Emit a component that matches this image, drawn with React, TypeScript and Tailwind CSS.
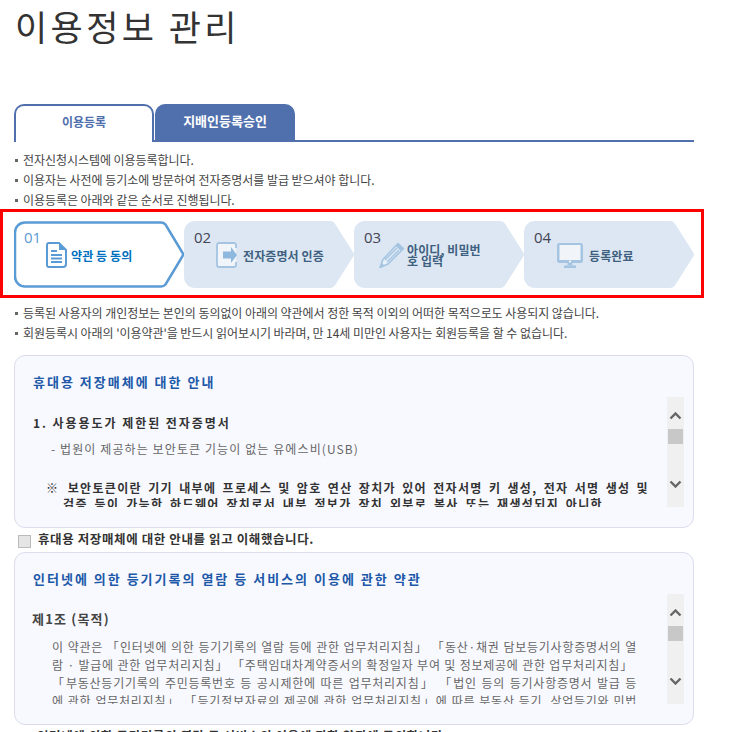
import type { ReactNode } from "react";

const KR = "font-['Noto_Sans_CJK_KR','Liberation_Sans',sans-serif]";

function DocIcon() {
	return (
		<svg width="21" height="26" viewBox="0 0 21 26">
			<path d="M3 1h10l7 7v14a3 3 0 0 1-3 3H3a2 2 0 0 1-2-2V3a2 2 0 0 1 2-2z" fill="#fff" stroke="#5b9bd5" strokeWidth="2" />
			<path d="M13 1v7h7z" fill="#5b9bd5" />
			<path d="M5 9h6M5 13h11M5 16.500h11M5 20h11" stroke="#5b9bd5" strokeWidth="1.800" />
		</svg>
	);
}

function ArrowDocIcon() {
	return (
		<svg width="21" height="26" viewBox="0 0 21 26">
			<path d="M20 6V3a2 2 0 0 0-2-2H3a2 2 0 0 0-2 2v20a2 2 0 0 0 2 2h15a2 2 0 0 0 2-2v-3" fill="#f1f5fa" stroke="#a4c4e2" strokeWidth="1.800" />
			<path d="M7 9.500h8V5l6 8-6 8v-4.500H7z" fill="#8fb8de" />
		</svg>
	);
}

function PencilIcon() {
	return (
		<svg width="26" height="26" viewBox="0 0 26 26">
			<path d="M19 1.500l5.500 5L9 22l-8 3.500 3-8z" fill="#e8f0f8" stroke="#a4c4e2" strokeWidth="1.600" strokeLinejoin="round" />
			<path d="M19 1.500l5.500 5-2.500 2.500-5.500-5z" fill="#a4c4e2" />
			<path d="M6 18L18 6M8 20L20 8" stroke="#a4c4e2" strokeWidth="1.500" />
			<path d="M1 25.500l1.500-5 3 3z" fill="#a4c4e2" />
		</svg>
	);
}

function MonitorIcon() {
	return (
		<svg width="26" height="25" viewBox="0 0 26 25">
			<rect x="0" y="0" width="26" height="20" rx="2.500" fill="#a4c4e2" />
			<rect x="2.500" y="2" width="21" height="15" fill="#f1f5fa" />
			<circle cx="13" cy="18.500" r="1" fill="#fff" />
			<path d="M10.500 20h5v2.500h-5z" fill="#a4c4e2" />
			<rect x="7" y="22.500" width="12" height="2.500" fill="#a4c4e2" />
		</svg>
	);
}

interface StepProps {
	num: string;
	label: ReactNode;
	icon: ReactNode;
	active?: boolean;
	rowClass: string;
}

function Step({ num, label, icon, active, rowClass }: StepProps) {
	return (
		<div className="relative h-[67px] w-[170px] shrink-0">
			<svg className="absolute inset-0" width="170" height="67" viewBox="0 0 170 67">
				{active ? (
					<path
						d="M11 1.500H147a6 6 0 0 1 4.500 2L168 31a4 4 0 0 1 0 5L151.500 63.500a6 6 0 0 1-4.500 2H11a10 10 0 0 1-10-10V11.500a10 10 0 0 1 10-10z"
						fill="#fff"
						stroke="#5b9bd5"
						strokeWidth="2.500"
					/>
				) : (
					<path
						d="M11 0H146a6 6 0 0 1 4.500 2L169 31a4 4 0 0 1 0 5L150.500 65a6 6 0 0 1-4.500 2H11A11 11 0 0 1 0 56V11A11 11 0 0 1 11 0z"
						fill="#dce7f3"
					/>
				)}
			</svg>
			<div className="relative flex flex-col pl-[10px] pt-[8px]">
				<div
					className={`h-[13px] font-['Open_Sans',sans-serif] text-[15px] leading-[16px] font-normal ${active ? "text-[#5b9bd5]" : "text-[#444455]"}`}
				>
					{num}
				</div>
				<div className={`flex h-[26px] items-center ${rowClass}`}>
					{icon}
					<div
						className={`text-[12px] leading-[11px] font-bold tracking-[0.1px] ${active ? "text-[#0070c0]" : "text-[#3f5f80]"}`}
					>
						{label}
					</div>
				</div>
			</div>
		</div>
	);
}

function Bullet({ children }: { children: ReactNode }) {
	return (
		<li className="flex h-[20px] items-center text-[12px] tracking-[-0.05px] whitespace-nowrap text-[#444]">
			<span className="mr-[5px] h-[3px] w-[3px] shrink-0 bg-[#666]" />
			{children}
		</li>
	);
}

function Scrollbar() {
	return (
		<div className="flex h-[110px] w-[17px] shrink-0 flex-col items-center bg-[#f0f0f0] pt-[15px]">
			<svg width="13" height="8" viewBox="0 0 13 8">
				<path d="M1.500 6.500L6.500 1.500l5 5" fill="none" stroke="#666" strokeWidth="2.400" />
			</svg>
			<div className="mt-[9px] h-[15px] w-[15px] bg-[#c8c8c8]" />
			<svg className="mt-[36px]" width="13" height="8" viewBox="0 0 13 8">
				<path d="M1.500 1.500l5 5 5-5" fill="none" stroke="#666" strokeWidth="2.400" />
			</svg>
		</div>
	);
}

function Box({ title, children }: { title: string; children: ReactNode }) {
	return (
		<div className="h-[173px] w-[680px] rounded-[11px] border border-[#dcdcec] bg-[#f8f9ff] pt-[17px] pr-[9px]">
			<div className="h-[24px] pl-[18px] text-[13px] leading-[18px] font-bold tracking-[2px] text-[#2058a8]">
				{title}
			</div>
			<div className="flex">
				<div className="h-[110px] flex-1 overflow-hidden">{children}</div>
				<Scrollbar />
			</div>
		</div>
	);
}

function Line({ children, className }: { children: ReactNode; className: string }) {
	return (
		<div className={`${className} h-[18px] text-justify text-[12px] leading-[18px] whitespace-nowrap [text-align-last:justify]`}>
			{children}
		</div>
	);
}

export default function App() {
	return (
		<div className={`h-[732px] w-[729px] overflow-hidden bg-white pl-[15px] ${KR}`}>
			<h1 className="h-[104px] pt-[1px] text-[35px] leading-[50px] font-normal tracking-[3.4px] text-[#333]">
				이용정보 관리
			</h1>

			{/* tabs */}
			<div className="flex h-[38px] w-[679px] items-end border-b-2 border-[#4f6fad]">
				<div className="-mb-[2px] -ml-px flex h-[38px] w-[140px] items-center justify-center rounded-t-[10px] border-2 border-b-0 border-[#4f6fad] bg-white pb-[4px] text-[12px] font-bold text-[#4f6fad]">
					이용등록
				</div>
				<div className="-mb-[2px] ml-px flex h-[38px] w-[140px] items-center justify-center rounded-t-[10px] bg-[#4f6fad] pb-[4px] text-[13px] font-bold text-white">
					지배인등록승인
				</div>
			</div>

			<ul className="mt-[8px] h-[59px]">
				<Bullet>전자신청시스템에 이용등록합니다.</Bullet>
				<Bullet>이용자는 사전에 등기소에 방문하여 전자증명서를 발급 받으셔야 합니다.</Bullet>
				<Bullet>이용등록은 아래와 같은 순서로 진행됩니다.</Bullet>
			</ul>

			{/* steps, red outline */}
			<div className="-ml-[15px] flex h-[89px] w-[704px] items-start border-[3px] border-[#ff0000] pt-[9px] pl-[11px]">
				<Step active num="01" label="약관 등 동의" icon={<DocIcon />} rowClass="ml-[22px] gap-[4px]" />
				<Step num="02" label="전자증명서 인증" icon={<ArrowDocIcon />} rowClass="ml-[22px] gap-[6px]" />
				<Step
					num="03"
					label={
						<>
							아이디, 비밀번
							<br />호 입력
						</>
					}
					icon={<PencilIcon />}
					rowClass="ml-[15px] gap-[2px]"
				/>
				<Step num="04" label="등록완료" icon={<MonitorIcon />} rowClass="ml-[23px] gap-[6px]" />
			</div>

			<ul className="mt-[5px] h-[52px]">
				<Bullet>등록된 사용자의 개인정보는 본인의 동의없이 아래의 약관에서 정한 목적 이외의 어떠한 목적으로도 사용되지 않습니다.</Bullet>
				<Bullet>회원등록시 아래의 '이용약관'을 반드시 읽어보시기 바라며, 만 14세 미만인 사용자는 회원등록을 할 수 없습니다.</Bullet>
			</ul>

			<div className="-ml-px flex flex-col">
				<Box title="휴대용 저장매체에 대한 안내">
					<div className="pl-[18px] pt-[17px] text-[#333]">
						<div className="h-[18px] text-[12px] leading-[18px] font-bold tracking-[1.95px]">1. 사용용도가 제한된 전자증명서</div>
						<div className="mt-[8px] pl-[18px] text-[12px] leading-[18px] tracking-[1.1px] text-[#666]">- 법원이 제공하는 보안토큰 기능이 없는 유에스비(USB)</div>
						<div className="mt-[21px] -translate-x-[5px] pl-[18px] font-bold text-[#333]">
							<Line className="w-[603px] tracking-[1.35px]">※ 보안토큰이란 기기 내부에 프로세스 및 암호 연산 장치가 있어 전자서명 키 생성, 전자 서명 생성 및</Line>
							<div className="-mt-[2px] w-[557px] pl-[17px]">
								<Line className="w-[540px] tracking-[1.35px]">검증 등이 가능한 하드웨어 장치로서 내부 정보가 장치 외부로 복사 또는 재생성되지 아니한</Line>
							</div>
						</div>
					</div>
				</Box>

				<div className="flex h-[24px] items-center pl-[4px] text-[12.500px] font-bold tracking-[0.6px] text-[#333]">
					<span className="mt-[3px] mr-[7px] h-[13px] w-[13px] border border-[#bbb] bg-[#e5e5e5]" />
					<span className="-mt-[2px]">휴대용 저장매체에 대한 안내를 읽고 이해했습니다.</span>
				</div>

				<Box title="인터넷에 의한 등기기록의 열람 등 서비스의 이용에 관한 약관">
					<div className="pl-[17px] pt-[16px]">
						<div className="h-[18px] text-[13px] leading-[18px] font-bold tracking-[1.2px] text-[#444]">제1조 (목적)</div>
						<div className="mt-[10px] pl-[20px] text-[#666]">
							<Line className="w-[585px] tracking-[0.75px]">이 약관은 「인터넷에 의한 등기기록의 열람 등에 관한 업무처리지침」 「동산·채권 담보등기사항증명서의 열</Line>
							<Line className="w-[581px] tracking-[0.75px]">람 · 발급에 관한 업무처리지침」 「주택임대차계약증서의 확정일자 부여 및 정보제공에 관한 업무처리지침」</Line>
							<Line className="w-[585px] tracking-[0.75px]">「부동산등기기록의 주민등록번호 등 공시제한에 따른 업무처리지침」 「법인 등의 등기사항증명서 발급 등</Line>
							<Line className="w-[585px] tracking-[0.75px]">에 관한 업무처리지침」 「등기정보자료의 제공에 관한 업무처리지침」에 따른 부동산 등기, 상업등기와 민법</Line>
						</div>
					</div>
				</Box>

				<div className="mt-[2px] pl-[23px] text-[12.500px] leading-[18px] font-bold tracking-[0.6px] text-[#333]">
					인터넷에 의한 등기기록의 열람 등 서비스의 이용에 관한 약관에 동의합니다.
				</div>
			</div>
		</div>
	);
}
